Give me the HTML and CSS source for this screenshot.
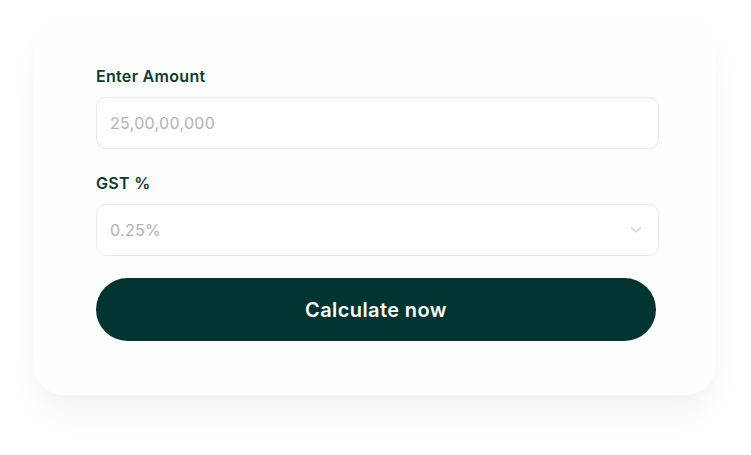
FILE: index.html
```html
<!DOCTYPE html>
<html>
<head>
<meta charset="utf-8">
<link rel="stylesheet" href="styles.css">
</head>
<body>
<div class="card">
  <label class="label">Enter Amount</label>
  <div class="field"><span class="placeholder">25,00,00,000</span></div>
  <label class="label label-gap">GST %</label>
  <div class="field select">
    <span class="placeholder">0.25%</span>
    <svg class="chev" width="12" height="8" viewBox="0 0 12 8"><path d="M1.5 1.8 L6 6 L10.5 1.8" fill="none" stroke="#d4d4d4" stroke-width="1.5" stroke-linecap="round" stroke-linejoin="round"/></svg>
  </div>
  <button class="btn">Calculate now</button>
</div>
</body>
</html>
```
FILE: styles.css
```css
html, body { margin: 0; padding: 0; background: #ffffff; }
body { font-family: Inter, "Open Sans", sans-serif; width: 751px; height: 455px; overflow: hidden; }
.card {
  margin: 16px 0 0 34px;
  width: 682px;
  box-sizing: border-box;
  padding: 49px 57px 54px 62px;
  background: #fdfefe;
  border-radius: 30px;
  box-shadow: 0 22px 36px -8px rgba(20, 40, 60, 0.06), 0 6px 14px -6px rgba(20, 40, 60, 0.03);
  display: flex;
  flex-direction: column;
}
.label {
  display: block;
  font-size: 16px;
  line-height: 22px;
  font-weight: 600;
  color: #0b3b2f;
  letter-spacing: 0.3px;
}
.label-gap { margin-top: 23px; }
.field {
  margin-top: 10px;
  height: 52px;
  box-sizing: border-box;
  border: 1px solid #e8e8e8;
  border-radius: 10px;
  background: #ffffff;
  display: flex;
  align-items: center;
  padding: 0 14px 0 13px;
}
.placeholder { font-size: 16px; color: #b3b3b3; letter-spacing: 0.3px; }
.select { justify-content: space-between; }
.chev { margin-right: 2px; }
.btn {
  margin-top: 22px;
  width: 560px;
  height: 63px;
  border: none;
  border-radius: 32px;
  background: #023432;
  color: #ffffff;
  font-family: Inter, "Open Sans", sans-serif;
  font-size: 20px;
  font-weight: 600;
  letter-spacing: 0.4px;
  cursor: pointer;
}
```
